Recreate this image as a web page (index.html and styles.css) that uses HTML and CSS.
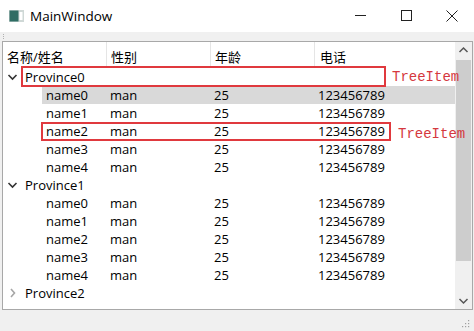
FILE: index.html
```html
<!DOCTYPE html>
<html>
<head>
<meta charset="utf-8">
<link rel="stylesheet" href="styles.css">
</head>
<body>
<div class="window">
  <div class="titlebar">
    <svg class="app-icon" width="15" height="12" viewBox="0 0 15 12">
      <rect x="0" y="0" width="15" height="12" fill="#cfd8d6"/>
      <rect x="0.5" y="0.5" width="9" height="11" fill="#2f6d64"/>
      <rect x="10.5" y="2" width="3" height="8" fill="#ffffff"/>
    </svg>
    <span class="title">MainWindow</span>
    <div class="controls">
      <svg class="ctl" width="46" height="32" viewBox="0 0 46 32"><line x1="18" y1="15.5" x2="29" y2="15.5" stroke="#222" stroke-width="1"/></svg>
      <svg class="ctl" width="46" height="32" viewBox="0 0 46 32"><rect x="18.5" y="10.5" width="10" height="10" fill="none" stroke="#222" stroke-width="1"/></svg>
      <svg class="ctl" width="46" height="32" viewBox="0 0 46 32"><path d="M17.5 10.5 L28.5 21.5 M28.5 10.5 L17.5 21.5" stroke="#222" stroke-width="1"/></svg>
    </div>
  </div>
  <div class="toolstrip"><span class="handle"></span></div>
  <div class="frame">
    <div class="tree">
      <div class="header">
        <div class="hcell">名称/姓名</div>
        <div class="hcell">性别</div>
        <div class="hcell">年龄</div>
        <div class="hcell last">电话</div>
      </div>
      <div class="rows">
        <div class="row parent">
          <div class="cell name"><svg class="chev" width="20" height="18" viewBox="0 0 20 18"><path d="M5.5 7 L9.5 11 L13.5 7" fill="none" stroke="#333" stroke-width="1.6"/></svg>Province0</div>
          <div class="cell"></div><div class="cell"></div><div class="cell"></div>
        </div>
        <div class="row child selected">
          <div class="cell name">name0</div><div class="cell">man</div><div class="cell">25</div><div class="cell">123456789</div>
        </div>
        <div class="row child">
          <div class="cell name">name1</div><div class="cell">man</div><div class="cell">25</div><div class="cell">123456789</div>
        </div>
        <div class="row child">
          <div class="cell name">name2</div><div class="cell">man</div><div class="cell">25</div><div class="cell">123456789</div>
        </div>
        <div class="row child">
          <div class="cell name">name3</div><div class="cell">man</div><div class="cell">25</div><div class="cell">123456789</div>
        </div>
        <div class="row child">
          <div class="cell name">name4</div><div class="cell">man</div><div class="cell">25</div><div class="cell">123456789</div>
        </div>
        <div class="row parent">
          <div class="cell name"><svg class="chev" width="20" height="18" viewBox="0 0 20 18"><path d="M5.5 7 L9.5 11 L13.5 7" fill="none" stroke="#333" stroke-width="1.6"/></svg>Province1</div>
          <div class="cell"></div><div class="cell"></div><div class="cell"></div>
        </div>
        <div class="row child">
          <div class="cell name">name0</div><div class="cell">man</div><div class="cell">25</div><div class="cell">123456789</div>
        </div>
        <div class="row child">
          <div class="cell name">name1</div><div class="cell">man</div><div class="cell">25</div><div class="cell">123456789</div>
        </div>
        <div class="row child">
          <div class="cell name">name2</div><div class="cell">man</div><div class="cell">25</div><div class="cell">123456789</div>
        </div>
        <div class="row child">
          <div class="cell name">name3</div><div class="cell">man</div><div class="cell">25</div><div class="cell">123456789</div>
        </div>
        <div class="row child">
          <div class="cell name">name4</div><div class="cell">man</div><div class="cell">25</div><div class="cell">123456789</div>
        </div>
        <div class="row parent">
          <div class="cell name"><svg class="chev" width="20" height="18" viewBox="0 0 20 18"><path d="M8 5 L11.5 9 L8 13" fill="none" stroke="#a6a6a6" stroke-width="1.6"/></svg>Province2</div>
          <div class="cell"></div><div class="cell"></div><div class="cell"></div>
        </div>
      </div>
    </div>
    <div class="vscroll">
      <div class="sbtn"><svg width="17" height="17" viewBox="0 0 17 17"><path d="M4.5 10 L8.5 6 L12.5 10" fill="none" stroke="#555" stroke-width="1.5"/></svg></div>
      <div class="thumb"></div>
      <div class="track"></div>
      <div class="sbtn"><svg width="17" height="17" viewBox="0 0 17 17"><path d="M4.5 7 L8.5 11 L12.5 7" fill="none" stroke="#555" stroke-width="1.5"/></svg></div>
    </div>
  </div>
  <div class="statusbar">
    <svg class="grip" width="8" height="8" viewBox="0 0 8 8">
      <rect x="6" y="0" width="1.2" height="1.2" fill="#a0a0a0"/>
      <rect x="3" y="3" width="1.2" height="1.2" fill="#a0a0a0"/>
      <rect x="6" y="3" width="1.2" height="1.2" fill="#a0a0a0"/>
      <rect x="0" y="6" width="1.2" height="1.2" fill="#a0a0a0"/>
      <rect x="3" y="6" width="1.2" height="1.2" fill="#a0a0a0"/>
      <rect x="6" y="6" width="1.2" height="1.2" fill="#a0a0a0"/>
    </svg>
  </div>

  <div class="mark mark1"></div>
  <div class="mark mark2"></div>
  <div class="tag tag1">TreeItem</div>
  <div class="tag tag2">TreeItem</div>
</div>
</body>
</html>
```

FILE: styles.css
```css
* { box-sizing: border-box; }
html, body { margin: 0; padding: 0; }
body {
  width: 474px;
  height: 331px;
  overflow: hidden;
  font-family: "Open Sans", "Noto Sans", "Noto Sans CJK SC", sans-serif;
  color: #000000;
}
.window {
  position: relative;
  width: 474px;
  height: 331px;
  display: flex;
  flex-direction: column;
  background: #f0f0f0;
}
.titlebar {
  height: 32px;
  background: #ffffff;
  display: flex;
  align-items: center;
  flex: none;
}
.app-icon { margin-left: 9px; flex: none; }
.title {
  margin-left: 6px;
  font-size: 13.5px;
  color: #000000;
  margin-top: -1px;
}
.controls {
  margin-left: auto;
  display: flex;
  margin-right: -1px;
}
.ctl { display: block; }
.toolstrip {
  height: 9px;
  flex: none;
  background: #f0f0f0;
  position: relative;
}
.handle {
  position: absolute;
  left: 3px; top: 2px;
  width: 1px; height: 5px;
  border-left: 1px dotted #b0b0b0;
}
.frame {
  flex: none;
  height: 269px;
  margin: 0 1px 0 2px;
  border: 1px solid #a8a8a8;
  background: #ffffff;
  display: flex;
}
.tree {
  flex: 1;
  display: flex;
  flex-direction: column;
  min-width: 0;
}
.header {
  height: 26px;
  display: grid;
  grid-template-columns: 104px 104px 104px 1fr;
  font-size: 13px;
}
.hcell {
  border-right: 1px solid #e5e5e5;
  padding: 5px 0 0 4px;
}
.hcell.last { border-right: none; padding-left: 5px; }
.rows { display: flex; flex-direction: column; }
.row {
  height: 18px;
  display: grid;
  grid-template-columns: 104px 104px 104px 1fr;
  font-size: 13px;
  line-height: 18px;
}
.cell {
  padding-left: 3px;
  white-space: nowrap;
  display: flex;
  align-items: center;
}
.cell.name { padding-left: 43px; }
.parent .cell.name { padding-left: 0; }
.chev { flex: none; display: block; margin-right: 2px; }
.row.selected .cell { background: #d9d9d9; }
.row.selected .cell.name { background: linear-gradient(to right, #ffffff 39px, #d9d9d9 39px); }
.vscroll {
  width: 17px;
  flex: none;
  background: #f0f0f0;
  display: flex;
  flex-direction: column;
}
.sbtn { height: 17px; flex: none; }
.sbtn svg { display: block; }
.thumb {
  height: 201px;
  margin: 1px 1px 0 1px;
  background: #cdcdcd;
  flex: none;
}
.track { flex: 1; }
.statusbar {
  flex: 1;
  background: #f0f0f0;
  position: relative;
}
.grip { position: absolute; right: 4px; bottom: 3px; }
.mark {
  position: absolute;
  border: 2px solid #e0393e;
}
.mark1 { left: 21px; top: 66px; width: 365px; height: 21px; }
.mark2 { left: 41px; top: 122px; width: 350px; height: 19px; }
.tag {
  position: absolute;
  font-family: "Liberation Mono", "DejaVu Sans Mono", monospace;
  font-size: 14px;
  color: #d5383e;
  line-height: 16px;
}
.tag1 { left: 392px; top: 69px; }
.tag2 { left: 398px; top: 126px; }
```
